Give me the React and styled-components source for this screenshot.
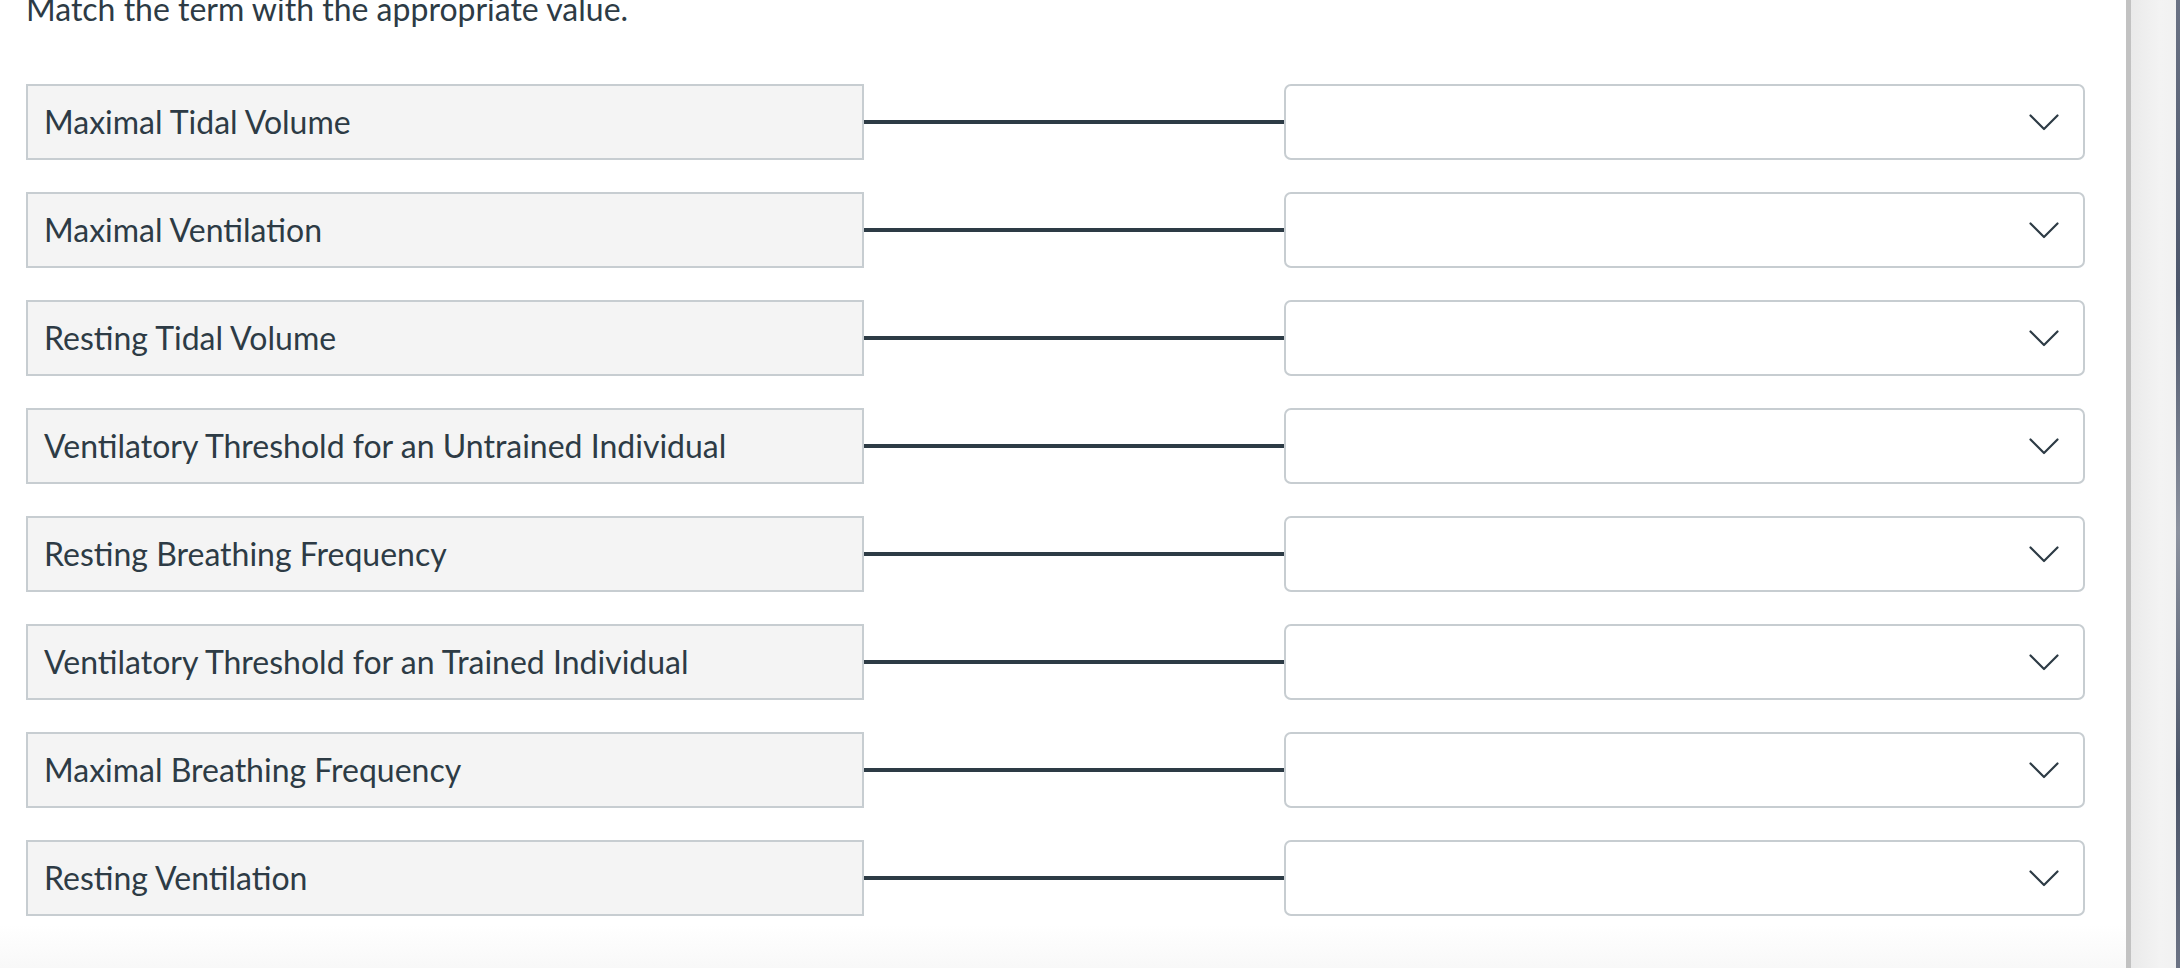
import React from "react";
import styled, { createGlobalStyle } from "styled-components";

const GlobalStyle = createGlobalStyle`
  html, body {
    margin: 0;
    padding: 0;
    background: #FFFFFF;
  }
  body {
    font-family: Lato, "Noto Sans", sans-serif;
    color: #2D3B45;
  }
`;

const Page = styled.div`
  display: flex;
  width: 2180px;
  height: 968px;
  overflow: hidden;
`;

const Main = styled.div`
  flex: 1;
  padding: 0 41px 0 26px;
  background: linear-gradient(to bottom, #FFFFFF 0, #FFFFFF 925px, #F8F8F8 968px);
`;

const Prompt = styled.p`
  margin: -10px 0 0;
  font-size: 32px;
  line-height: 1.2;
  color: #2D3B45;
  white-space: nowrap;
`;

const List = styled.div`
  display: flex;
  flex-direction: column;
  gap: 32px;
  margin-top: 56px;
`;

const Row = styled.div`
  display: grid;
  grid-template-columns: 838px 1fr 801px;
  align-items: center;
  height: 76px;
`;

const Term = styled.div`
  box-sizing: border-box;
  display: flex;
  align-items: center;
  height: 76px;
  padding: 0 16px;
  background: #F4F4F4;
  border: 2px solid #C7CDD1;
  font-size: 32px;
  line-height: 1.15;
  color: #2D3B45;
  white-space: nowrap;
`;

const Connector = styled.div`
  height: 4px;
  background: #2D3B45;
`;

const Select = styled.div`
  box-sizing: border-box;
  display: flex;
  align-items: center;
  justify-content: flex-end;
  height: 76px;
  padding-right: 24px;
  background: #FFFFFF;
  border: 2px solid #C7CDD1;
  border-radius: 7px;
`;

const Chevron = () => (
  <svg width="30" height="17" viewBox="0 0 30 17" fill="none">
    <polyline
      points="1.5,1.5 15,15 28.5,1.5"
      stroke="#2D3B45"
      strokeWidth="2.2"
      strokeLinecap="round"
      strokeLinejoin="round"
    />
  </svg>
);

const Edge = styled.aside`
  box-sizing: border-box;
  display: flex;
  flex: 0 0 54px;
  border-left: 5px solid #C2C2C2;
  background: linear-gradient(to right, #EAEAEA, #F3F3F3 60%, #F1F1F1);
`;

const EdgeFill = styled.div`
  flex: 1;
`;

const Backdrop = styled.div`
  width: 4px;
  background: linear-gradient(to bottom, #6A7284, #4C566B 30%, #8D93A0 55%, #4A5468 80%, #6C7384);
`;

const terms = [
  "Maximal Tidal Volume",
  "Maximal Ventilation",
  "Resting Tidal Volume",
  "Ventilatory Threshold for an Untrained Individual",
  "Resting Breathing Frequency",
  "Ventilatory Threshold for an Trained Individual",
  "Maximal Breathing Frequency",
  "Resting Ventilation",
];

export default function App() {
  return (
    <>
      <GlobalStyle />
      <Page>
        <Main>
          <Prompt>Match the term with the appropriate value.</Prompt>
          <List>
            {terms.map((t) => (
              <Row key={t}>
                <Term>{t}</Term>
                <Connector />
                <Select>
                  <Chevron />
                </Select>
              </Row>
            ))}
          </List>
        </Main>
        <Edge>
          <EdgeFill />
          <Backdrop />
        </Edge>
      </Page>
    </>
  );
}
